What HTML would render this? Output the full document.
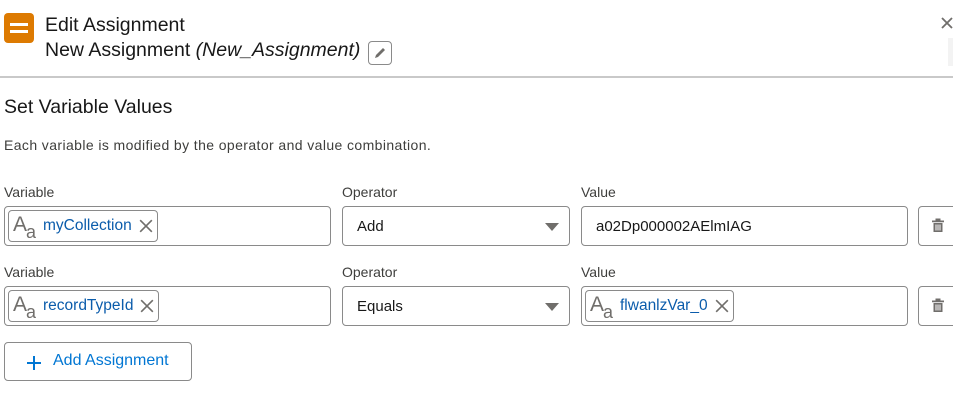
<!DOCTYPE html>
<html><head><meta charset="utf-8"><style>
body{margin:0;width:953px;height:401px;overflow:hidden;background:#fff;font-family:"Liberation Sans",sans-serif;color:#181818;position:relative}
.a{position:absolute}
.inp{position:absolute;border:1px solid #8a8a8a;border-radius:4px;box-sizing:border-box;height:40px}
.lbl{position:absolute;font-size:14px;color:#3e3e3c}
.pill{position:absolute;top:3px;left:3px;height:32px;border:1px solid #8a8a8a;border-radius:4px;box-sizing:border-box;display:flex;align-items:center;padding:0 4px 0 2px}
.aa{position:relative;width:28px;height:28px;color:#706e6b}
.aa .A{position:absolute;left:2px;top:1px;font-size:21px}
.aa .s{position:absolute;left:15px;top:10px;font-size:18px}
.pt{color:#0b5cab;font-size:15.5px;margin-left:4px}
.x{margin-left:7px;width:14px;height:14px}
.sel{font-size:15px;display:flex;align-items:center;padding-left:14px}
.trash{position:absolute;width:40px;height:40px;border:1px solid #8a8a8a;border-radius:4px;box-sizing:border-box}
</style></head><body>
<div class="a" style="left:4px;top:13px;width:30px;height:30px;background:#dd7a01;border-radius:4px">
<div class="a" style="left:6px;top:10px;width:18px;height:2.5px;background:#fff"></div>
<div class="a" style="left:6px;top:17px;width:18px;height:2.5px;background:#fff"></div></div>
<div class="a" style="left:45px;top:14px;font-size:19.5px">Edit Assignment</div>
<div class="a" style="left:45px;top:39px;font-size:19.5px">New Assignment <i>(New_Assignment)</i></div>
<div class="a" style="left:368px;top:41px;width:24px;height:24px;border:1px solid #8a8a8a;border-radius:4px;box-sizing:border-box">
<svg width="22" height="22" viewBox="0 0 22 22" style="position:absolute;left:0;top:0"><path d="M6 16 L7 13 L14 6 L16 8 L9 15 Z" fill="#706e6b"/></svg></div>
<svg class="a" style="left:940px;top:16px" width="14" height="14"><path d="M2 2L12 12M12 2L2 12" stroke="#706e6b" stroke-width="1.8"/></svg>
<div class="a" style="left:948px;top:38px;width:5px;height:28px;background:#f3f3f3"></div>
<div class="a" style="left:0;top:76px;width:953px;height:2px;background:#c9c9c9"></div>
<div class="a" style="left:4px;top:96px;font-size:19.5px">Set Variable Values</div>
<div class="a" style="left:4px;top:137px;font-size:14px;letter-spacing:.4px;color:#3e3e3c">Each variable is modified by the operator and value combination.</div>

<div class="lbl" style="left:4px;top:184px">Variable</div>
<div class="lbl" style="left:342px;top:184px">Operator</div>
<div class="lbl" style="left:581px;top:184px">Value</div>
<div class="inp" style="left:4px;top:206px;width:327px"><div class="pill"><div class="aa"><span class="A">A</span><span class="s">a</span></div><span class="pt">myCollection</span><svg class="x" viewBox="0 0 12 12"><path d="M1 1L11 11M11 1L1 11" stroke="#706e6b" stroke-width="1.4"/></svg></div></div>
<div class="inp sel" style="left:342px;top:206px;width:228px">Add<svg class="a" style="left:202px;top:16px" width="14" height="8"><path d="M0 0H14L7 8Z" fill="#706e6b"/></svg></div>
<div class="inp sel" style="left:581px;top:206px;width:327px">a02Dp000002AElmIAG</div>
<div class="trash" style="left:918px;top:206px"><svg width="38" height="38"><path d="M13 13.5h12v1.8H13z M16.5 11.5h5v2h-5z M14.5 16h9v9h-9z" fill="#706e6b"/><path d="M17 17.5v6M19 17.5v6M21 17.5v6" stroke="#fff" stroke-width="1"/></svg></div>

<div class="lbl" style="left:4px;top:264px">Variable</div>
<div class="lbl" style="left:342px;top:264px">Operator</div>
<div class="lbl" style="left:581px;top:264px">Value</div>
<div class="inp" style="left:4px;top:286px;width:327px"><div class="pill"><div class="aa"><span class="A">A</span><span class="s">a</span></div><span class="pt">recordTypeId</span><svg class="x" viewBox="0 0 12 12"><path d="M1 1L11 11M11 1L1 11" stroke="#706e6b" stroke-width="1.4"/></svg></div></div>
<div class="inp sel" style="left:342px;top:286px;width:228px">Equals<svg class="a" style="left:202px;top:16px" width="14" height="8"><path d="M0 0H14L7 8Z" fill="#706e6b"/></svg></div>
<div class="inp" style="left:581px;top:286px;width:327px"><div class="pill"><div class="aa"><span class="A">A</span><span class="s">a</span></div><span class="pt">flwanlzVar_0</span><svg class="x" viewBox="0 0 12 12"><path d="M1 1L11 11M11 1L1 11" stroke="#706e6b" stroke-width="1.4"/></svg></div></div>
<div class="trash" style="left:918px;top:286px"><svg width="38" height="38"><path d="M13 13.5h12v1.8H13z M16.5 11.5h5v2h-5z M14.5 16h9v9h-9z" fill="#706e6b"/><path d="M17 17.5v6M19 17.5v6M21 17.5v6" stroke="#fff" stroke-width="1"/></svg></div>

<div class="a" style="left:4px;top:342px;width:188px;height:39px;border:1px solid #8a8a8a;border-radius:4px;box-sizing:border-box">
<svg class="a" style="left:21px;top:12px" width="16" height="16"><path d="M8 1V15M1 8H15" stroke="#0176d3" stroke-width="2"/></svg>
<span class="a" style="left:48px;top:9px;font-size:16px;color:#0176d3">Add Assignment</span></div>
</body></html>
